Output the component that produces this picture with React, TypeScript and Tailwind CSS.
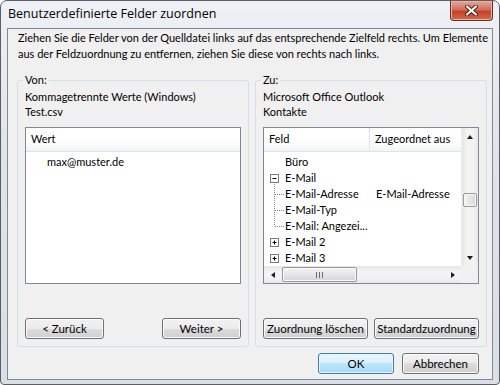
import type { ReactNode } from 'react';

const font = "font-['Lato',sans-serif]";

const btn =
  'flex items-center justify-center h-[21px] rounded-[3px] border border-[#707070] bg-[linear-gradient(#f2f2f2_0%,#ebebeb_50%,#dddddd_50%,#cfcfcf_100%)] shadow-[inset_0_0_0_1px_#fcfcfc] text-[11.5px] text-black whitespace-nowrap';

const okBtn =
  'flex items-center justify-center h-[21px] rounded-[3px] border border-[#3c7fb1] bg-[linear-gradient(#eaf6fd_0%,#d9f0fc_50%,#bee6fd_50%,#a7d9f5_100%)] shadow-[inset_0_0_0_1px_#e6f4fc] text-[11.5px] text-black';

function Arrow({ dir }: { dir: 'up' | 'down' | 'left' | 'right' }) {
  const pts = {
    up: '4,1 7,5 1,5',
    down: '1,1 7,1 4,5',
    left: '5,1 5,7 1,4',
    right: '1,1 1,7 5,4',
  }[dir];
  const size = dir === 'up' || dir === 'down' ? { w: 8, h: 6 } : { w: 6, h: 8 };
  return (
    <svg width={size.w} height={size.h} viewBox={`0 0 ${size.w} ${size.h}`}>
      <polygon points={pts} fill="#1f1f1f" />
    </svg>
  );
}

function VScroll() {
  return (
    <div className="flex w-[17px] flex-col bg-[linear-gradient(90deg,#e5e5e5,#f3f3f3_30%,#f3f3f3_70%,#e8e8e8)] border-l border-[#ececec]">
      <div className="flex h-[17px] items-center justify-center">
        <Arrow dir="up" />
      </div>
      <div className="h-[48px]" />
      <div className="mx-[1px] h-[14px] rounded-[2px] border border-[#979797] bg-[linear-gradient(90deg,#f6f6f6,#e6e6e6_50%,#d6d6d6)] shadow-[inset_0_0_0_1px_#fafafa]" />
      <div className="flex-1" />
      <div className="flex h-[17px] items-center justify-center">
        <Arrow dir="down" />
      </div>
    </div>
  );
}

function HScroll() {
  return (
    <div className="flex flex-1 items-stretch bg-[linear-gradient(#e5e5e5,#f3f3f3_30%,#f3f3f3_70%,#e8e8e8)]">
      <div className="flex w-[17px] items-center justify-center">
        <Arrow dir="left" />
      </div>
      <div className="w-[1px]" />
      <div className="my-[1px] flex w-[75px] items-center justify-center rounded-[2px] border border-[#979797] bg-[linear-gradient(#f6f6f6,#e6e6e6_50%,#d6d6d6)] shadow-[inset_0_0_0_1px_#fafafa]">
        <svg width="7" height="6" viewBox="0 0 7 6">
          <path d="M0.5 0v6M3.5 0v6M6.5 0v6" stroke="#6c6c6c" strokeWidth="1" />
        </svg>
      </div>
      <div className="flex-1" />
      <div className="flex w-[17px] items-center justify-center">
        <Arrow dir="right" />
      </div>
    </div>
  );
}

type Glyph = 'none' | 'minus' | 'plus' | 'child' | 'last';

function TreeGlyph({ kind }: { kind: Glyph }) {
  return (
    <svg width="21" height="16" viewBox="0 0 21 16" className="shrink-0">
      {(kind === 'child' || kind === 'last') && (
        <>
          <path
            d={kind === 'child' ? 'M10.5 0V16' : 'M10.5 0V8.5'}
            stroke="#8c8c8c"
            strokeDasharray="1 1"
          />
          <path d="M11 8.5H20" stroke="#8c8c8c" strokeDasharray="1 1" />
        </>
      )}
      {(kind === 'minus' || kind === 'plus') && (
        <>
          {kind === 'minus' && <path d="M10.5 12V16" stroke="#8c8c8c" strokeDasharray="1 1" />}
          <rect x="6.5" y="4.5" width="8" height="8" fill="#fff" stroke="#7a7a7a" />
          <path d="M8.5 8.5H12.5" stroke="#000" />
          {kind === 'plus' && <path d="M10.5 6.5V10.5" stroke="#000" />}
        </>
      )}
    </svg>
  );
}

const treeRows: { glyph: Glyph; label: string; mapped?: string }[] = [
  { glyph: 'none', label: 'Büro' },
  { glyph: 'minus', label: 'E-Mail' },
  { glyph: 'child', label: 'E-Mail-Adresse', mapped: 'E-Mail-Adresse' },
  { glyph: 'child', label: 'E-Mail-Typ' },
  { glyph: 'last', label: 'E-Mail: Angezei...' },
  { glyph: 'plus', label: 'E-Mail 2' },
  { glyph: 'plus', label: 'E-Mail 3' },
];

const header =
  'flex h-[24px] shrink-0 items-center border-b border-[#e2e3e4] bg-[linear-gradient(#ffffff,#ffffff_50%,#f3f4f6)]';

function GroupBox({ legend, lines, children, buttons }: { legend: string; lines: string[]; children: ReactNode; buttons: ReactNode }) {
  return (
    <fieldset className="h-[275px] w-[232px] rounded-[3px] border border-[#d5dfe5] px-[7px]">
      <legend className="ml-[-2px] px-[2px] leading-[16px]">{legend}</legend>
      <div className="mt-[1px] leading-[15px]">
        {lines.map((l) => (
          <div key={l}>{l}</div>
        ))}
      </div>
      <div className="mt-[8px] flex h-[157px] flex-col border border-[#828790] bg-white">{children}</div>
      <div className="mt-[34px] flex justify-between">{buttons}</div>
    </fieldset>
  );
}

export default function App() {
  return (
    <div className={`h-[385px] w-[500px] overflow-hidden bg-white text-[11px] text-black ${font}`}>
      <div className="relative flex h-full flex-col rounded-t-[7px] rounded-b-[4px] border border-[#5b5f64] bg-[linear-gradient(#eef1f5,#dfe4ea_40%,#d9dfe6)] px-[6px] pb-[4px]">
        {/* title bar */}
        <div className="flex h-[27px] shrink-0 items-center pl-[1px] font-['Open_Sans',sans-serif] text-[12.5px] text-black">
          Benutzerdefinierte Felder zuordnen
        </div>
        <div className="absolute top-0 right-[6px] flex h-[20px] w-[43px] items-center justify-center rounded-b-[4px] border border-t-0 border-[#6e2a22] bg-[linear-gradient(#e8a797,#d0705c_45%,#c5432c_55%,#d06a4a)] shadow-[inset_0_0_0_1px_#eab2a4]">
          <svg width="13" height="11" viewBox="0 0 13 11">
            <path d="M2 1.5L11 9.5M11 1.5L2 9.5" stroke="#4a1810" strokeWidth="4" strokeLinecap="round" />
            <path d="M2 1.5L11 9.5M11 1.5L2 9.5" stroke="#fff" strokeWidth="2.2" strokeLinecap="round" />
          </svg>
        </div>

        {/* client area */}
        <div className="flex flex-1 flex-col border border-[#848990] bg-[#f0f0f0]">
          <div className="whitespace-nowrap pt-[1px] pl-[10px] leading-[16px]">
            <div>Ziehen Sie die Felder von der Quelldatei links auf das entsprechende Zielfeld rechts. Um Elemente</div>
            <div>aus der Feldzuordnung zu entfernen, ziehen Sie diese von rechts nach links.</div>
          </div>

          <div className="mt-[10px] flex gap-[6px] pl-[9px]">
            <GroupBox
              legend="Von:"
              lines={['Kommagetrennte Werte (Windows)', 'Test.csv']}
              buttons={
                <>
                  <button className={`${btn} w-[79px]`}>&lt; Zurück</button>
                  <button className={`${btn} w-[79px]`}>Weiter &gt;</button>
                </>
              }
            >
              <div className={`${header} pl-[5px]`}>Wert</div>
              <div className="pt-[2px] pl-[21px] leading-[16px]">max@muster.de</div>
            </GroupBox>

            <GroupBox
              legend="Zu:"
              lines={['Microsoft Office Outlook', 'Kontakte']}
              buttons={
                <>
                  <button className={`${btn} w-[105px]`}>Zuordnung löschen</button>
                  <button className={`${btn} w-[105px]`}>Standardzuordnung</button>
                </>
              }
            >
              <div className="flex min-h-0 flex-1">
                <div className="flex min-w-0 flex-1 flex-col overflow-hidden">
                  <div className={`${header} whitespace-nowrap`}>
                    <div className="flex h-full w-[106px] shrink-0 items-center border-r border-[#e2e3e4] pl-[5px]">Feld</div>
                    <div className="pl-[5px]">Zugeordnet aus</div>
                  </div>
                  <div className="pt-[2px]">
                    {treeRows.map((r) => (
                      <div key={r.label} className="flex h-[16px] items-center whitespace-nowrap">
                        <div className="flex w-[106px] shrink-0 items-center">
                          <TreeGlyph kind={r.glyph} />
                          <span>{r.label}</span>
                        </div>
                        {r.mapped && <span className="pl-[6px]">{r.mapped}</span>}
                      </div>
                    ))}
                  </div>
                </div>
                <VScroll />
              </div>
              <div className="flex h-[17px] shrink-0">
                <HScroll />
                <div className="w-[17px] bg-[#f0f0f0]" />
              </div>
            </GroupBox>
          </div>

          <div className="mt-[6px] flex justify-end gap-[8px] pr-[13px]">
            <button className={`${okBtn} w-[76px]`}>OK</button>
            <button className={`${btn} w-[77px]`}>Abbrechen</button>
          </div>
        </div>
      </div>
    </div>
  );
}
